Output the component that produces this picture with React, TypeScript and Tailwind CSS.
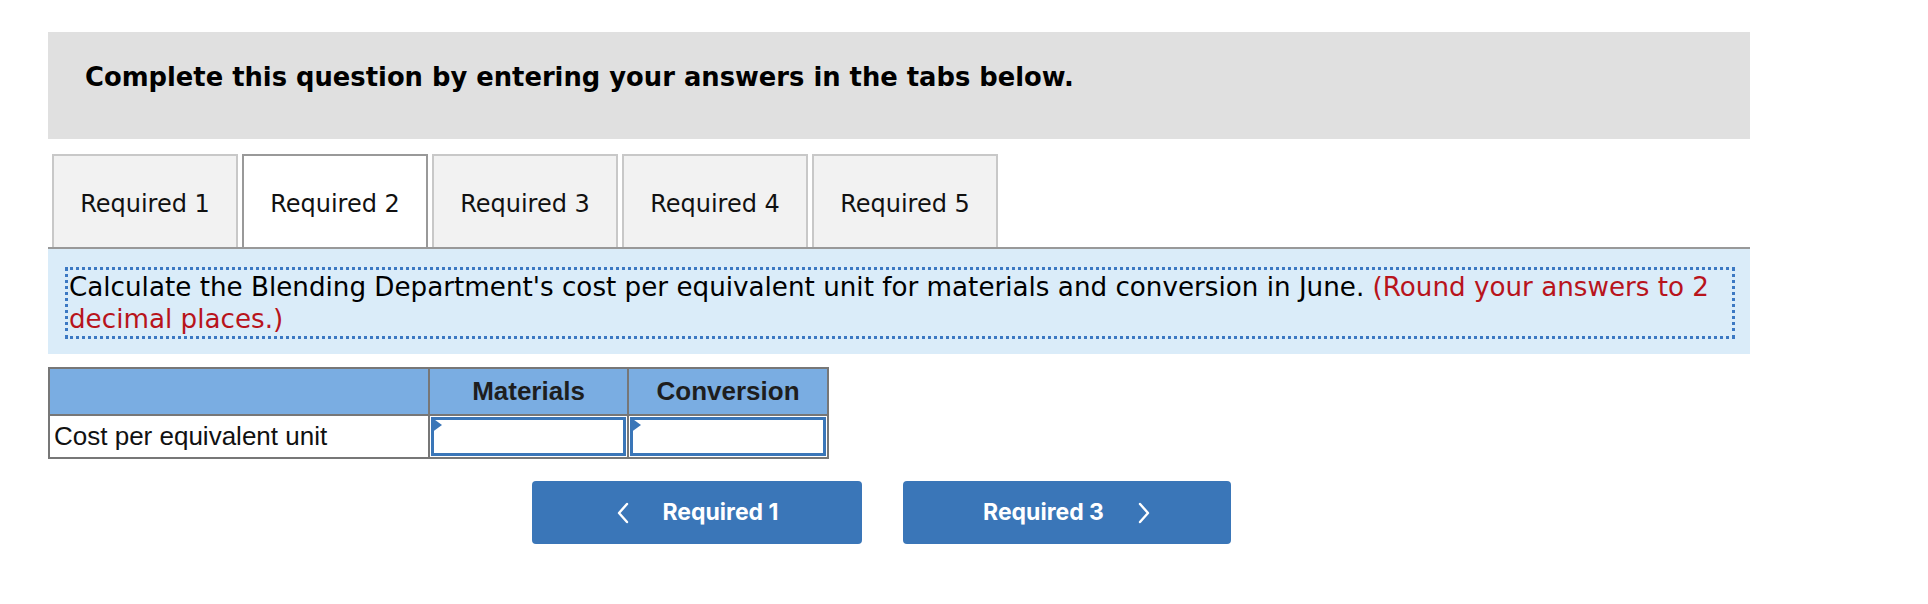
import React from 'react'

const tabs = ['Required 1', 'Required 2', 'Required 3', 'Required 4', 'Required 5']

function Chevron({ dir }: { dir: 'left' | 'right' }) {
  return (
    <svg width="14" height="24" viewBox="0 0 14 24" fill="none" className="shrink-0">
      <path
        d={dir === 'left' ? 'M11 3 L3 12 L11 21' : 'M3 3 L11 12 L3 21'}
        stroke="white"
        strokeWidth="2.4"
        strokeLinecap="round"
        strokeLinejoin="round"
      />
    </svg>
  )
}

function AnswerCell() {
  return (
    <td className="border-2 border-[#777777] p-[1px] h-[43px] bg-white">
      <div className="relative h-full w-full border-[3px] border-[#3a76b8]">
        {/* flag marker in the corner */}
        <span className="absolute -left-[3px] -top-[3px] w-0 h-0 border-t-[8px] border-b-[8px] border-l-[11px] border-t-transparent border-b-transparent border-l-[#3a76b8]" />
        <input className="h-full w-full outline-none bg-transparent" />
      </div>
    </td>
  )
}

export default function App() {
  const active = 1

  return (
    <div className="min-h-[604px] bg-white pt-[32px] pl-[48px]">
      <div className="w-[1702px]">
        {/* instructions banner */}
        <div className="h-[107px] bg-[#e0e0e0] pl-[37px] pt-[29px]">
          <h1 className="text-[25.8px] font-bold leading-[32px] text-black font-['DejaVu_Sans',sans-serif]">
            Complete this question by entering your answers in the tabs below.
          </h1>
        </div>

        {/* tabs */}
        <div className="mt-[15px] flex gap-[4px] pl-[4px] border-b-2 border-[#999999]">
          {tabs.map((t, i) => (
            <button
              key={t}
              className={`w-[186px] h-[93px] -mb-[2px] pt-[4px] text-[24px] text-[#111] font-['DejaVu_Sans',sans-serif] ${
                i === active
                  ? 'bg-white border-2 border-b-0 border-[#999999]'
                  : 'bg-[#f2f2f2] border-2 border-b-0 border-[#c8c8c8] mb-0'
              }`}
            >
              {t}
            </button>
          ))}
        </div>

        {/* question text */}
        <div className="bg-[#daecf9] pl-[17px] pr-[15px] pt-[18px] pb-[15px]">
          <div className="border-[3px] border-dotted border-[#3b78c3] pl-[1px] py-[1px]">
            <p className="text-[26.2px] leading-[32px] text-black font-['DejaVu_Sans',sans-serif]">
              Calculate the Blending Department's cost per equivalent unit for materials and conversion in June.{' '}
              <span className="text-[#b8141c]">(Round your answers to 2 decimal places.)</span>
            </p>
          </div>
        </div>

        {/* answer table */}
        <table className="mt-[13px] border-collapse font-['Liberation_Sans',Arial,sans-serif]">
          <thead>
            <tr className="bg-[#7aade2] h-[47px]">
              <th className="w-[380px] border-2 border-[#777777]" />
              <th className="w-[199px] border-2 border-[#777777] text-[26px] font-bold text-[#1e1e1e]">Materials</th>
              <th className="w-[200px] border-2 border-[#777777] text-[26px] font-bold text-[#1e1e1e]">Conversion</th>
            </tr>
          </thead>
          <tbody>
            <tr>
              <td className="border-2 border-[#777777] h-[43px] pl-[4px] text-[26px] text-[#111] bg-white">
                Cost per equivalent unit
              </td>
              <AnswerCell />
              <AnswerCell />
            </tr>
          </tbody>
        </table>

        {/* navigation */}
        <div className="mt-[22px] ml-[484px] flex gap-[41px] font-['Inter',sans-serif]">
          <button className="w-[330px] h-[63px] rounded-[4px] bg-[#3a76b8] flex items-center justify-center gap-[33px] text-white text-[23px] font-bold">
            <Chevron dir="left" />
            <span>Required 1</span>
          </button>
          <button className="w-[328px] h-[63px] rounded-[4px] bg-[#3a76b8] flex items-center justify-center gap-[33px] text-white text-[23px] font-bold">
            <span>Required 3</span>
            <Chevron dir="right" />
          </button>
        </div>
      </div>
    </div>
  )
}
